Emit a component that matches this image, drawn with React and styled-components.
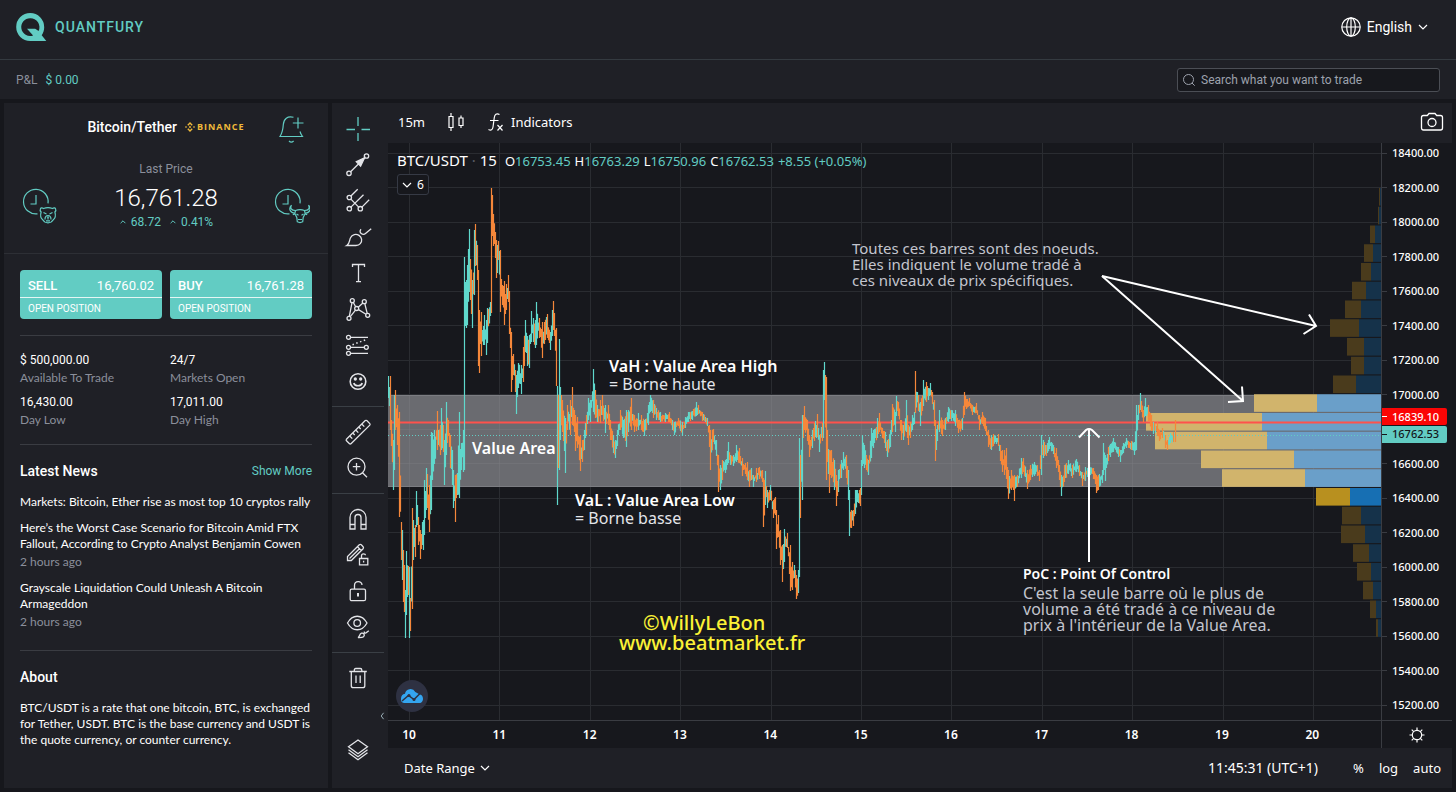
import React, { useState } from 'react';
import styled, { createGlobalStyle } from 'styled-components';

const GlobalStyle = createGlobalStyle`
  * {
    box-sizing: border-box;
  }

  body {
    margin: 0;
    background: #16171c;
    color: #fff;
    font-family: Roboto, 'Noto Sans', sans-serif;
    font-size: 12px;
    line-height: 16px;
  }

  button, input, select {
    font: inherit;
    color: inherit;
  }

  button {
    padding: 0;
    border: 0;
    background: none;
    cursor: pointer;
  }

  h1, h2, p, ul, dl, dd {
    margin: 0;
    padding: 0;
  }

  svg {
    display: block;
  }
`;

const Page = styled.div`
  display: flex;
  flex-direction: column;
  min-height: 100vh;
`;

const Header = styled.header`
  display: flex;
  align-items: center;
  justify-content: space-between;
  height: 60px;
  padding: 0 28px 6px 16px;
  background: #1f2026;
  border-bottom: 1px solid #343a40;
`;

const Brand = styled.a`
  display: flex;
  align-items: center;
  gap: 8px;
  color: #62ccc3;
  font-size: 14px;
  font-weight: 500;
  letter-spacing: 1px;
  text-decoration: none;
`;

const LanguageButton = styled.button`
  display: flex;
  align-items: center;
  gap: 6px;
  font-size: 14px;
`;

const AccountBar = styled.div`
  display: flex;
  align-items: center;
  justify-content: space-between;
  height: 39px;
  padding: 0 16px;
  background: #1f2026;
`;

const Profit = styled.div`
  display: flex;
  gap: 8px;
  color: #8b8f9b;

  span {
    color: #62ccc3;
  }
`;

const SearchBox = styled.label`
  display: flex;
  align-items: center;
  gap: 6px;
  width: 263px;
  height: 24px;
  padding: 0 5px;
  border: 1px solid #4b4e55;
  border-radius: 3px;
  background: #17181d;
  color: #9da2ad;

  input {
    flex: 1;
    min-width: 0;
    padding: 0;
    border: 0;
    outline: 0;
    background: none;
  }

  input::placeholder {
    color: #9da2ad;
    opacity: 1;
  }
`;

const Workspace = styled.main`
  display: flex;
  flex: 1;
  gap: 4px;
  padding: 4px 4px 5px;
`;

const Sidebar = styled.aside`
  width: 324px;
  flex-shrink: 0;
  background: #1f2026;
`;

const Quote = styled.section`
  display: grid;
  grid-template-columns: 36px 1fr 36px;
  grid-template-rows: 44px 1fr;
  align-items: center;
  height: 151px;
  padding: 2px 18px 11px;
  border-bottom: 1px solid #2d2f35;

  > svg {
    margin-top: 20px;
  }
`;

const AlertButton = styled.button`
  justify-self: center;
  margin-top: 4px;
`;

const Instrument = styled.div`
  display: flex;
  align-items: center;
  justify-content: center;
  gap: 8px;

  h1 {
    font-size: 14px;
    font-weight: 500;
    white-space: nowrap;
  }
`;

const Exchange = styled.span`
  display: flex;
  align-items: center;
  gap: 2px;
  color: #f0b93a;
  font-family: 'Open Sans', sans-serif;
  font-size: 9px;
  font-weight: 700;
  letter-spacing: 1px;
`;

const LastPrice = styled.div`
  grid-column: 2;
  display: flex;
  flex-direction: column;
  align-items: center;
  color: #8b8f9b;
`;

const PriceValue = styled.div`
  margin: 7px 0 2px;
  color: #fff;
  font-size: 24px;
  font-weight: 300;
  line-height: 28px;
`;

const Change = styled.div`
  display: flex;
  gap: 8px;
  color: #62ccc3;

  span {
    display: flex;
    align-items: center;
    gap: 4px;
  }
`;

const SidebarSection = styled.section`
  margin: 0 16px;
  padding: ${props => props.$padding};
  border-bottom: ${props => (props.$last ? '0' : '1px solid #3a3c42')};
`;

const Deals = styled.div`
  display: grid;
  grid-template-columns: 1fr 1fr;
  gap: 8px;
`;

const DealButton = styled.button`
  border-radius: 4px;
  background: #62ccc3;
  text-align: left;
  overflow: hidden;
`;

const DealPrice = styled.span`
  display: flex;
  align-items: center;
  justify-content: space-between;
  height: 28px;
  padding: 4px 8px 0;
  border-bottom: 1px solid #e4f6f4;
  font-size: 13px;

  b {
    font-weight: 500;
  }
`;

const DealAction = styled.span`
  display: block;
  padding: 3px 8px 2px;
  font-size: 10px;
`;

const Stats = styled.dl`
  display: grid;
  grid-template-columns: 1fr 1fr;
  gap: 8px;

  > div {
    display: flex;
    flex-direction: column-reverse;
    gap: 2px;
  }

  dt {
    color: #8b8f9b;
    font-family: Lato, sans-serif;
  }
`;

const SectionHead = styled.div`
  display: flex;
  justify-content: space-between;
  margin-bottom: 15px;

  h2 {
    font-size: 14px;
    font-weight: 500;
    line-height: 16px;
  }

  a {
    color: #62ccc3;
    text-decoration: none;
  }
`;

const NewsList = styled.ul`
  display: flex;
  flex-direction: column;
  gap: 10px;
  font-family: Lato, sans-serif;
  list-style: none;

  a {
    color: inherit;
    text-decoration: none;
  }
`;

const NewsTime = styled.div`
  margin-top: 2px;
  color: #8b8f9b;
`;

const Description = styled.p`
  font-family: Lato, sans-serif;
`;

const Terminal = styled.section`
  display: flex;
  flex: 1;
  min-width: 0;
  background: #1f2026;
  font-family: 'Noto Sans', sans-serif;
`;

const Tools = styled.nav`
  position: relative;
  display: flex;
  flex-direction: column;
  width: 56px;
  padding: 8px 4px 20px 0;
`;

const ToolButton = styled.button`
  display: grid;
  place-items: center;
  height: 36px;
  margin-top: ${props => (props.$bottom ? 'auto' : '0')};
  color: ${props => (props.$active ? '#62ccc3' : '#e3e4e8')};
`;

const ToolDivider = styled.hr`
  width: 100%;
  height: 1px;
  margin: 7px 0;
  border: 0;
  background: #3a3f45;
`;

const CollapseButton = styled.button`
  position: absolute;
  right: 2px;
  bottom: 68px;
  color: #9fb4bd;
`;

const ChartPanel = styled.div`
  display: flex;
  flex-direction: column;
  flex: 1;
  min-width: 0;
`;

const ChartToolbar = styled.div`
  display: flex;
  align-items: center;
  gap: 22px;
  height: 40px;
  padding: 0 8px 2px 10px;
  font-size: 13px;

  button {
    display: flex;
    align-items: center;
    gap: 6px;
  }

  button:last-child {
    margin-left: auto;
  }
`;

const ChartBody = styled.div`
  display: grid;
  grid-template-columns: 1fr 71px;
  background: #17181d;
`;

const Plot = styled.div`
  position: relative;

  > svg {
    width: 100%;
    height: auto;
  }
`;

const Legend = styled.div`
  position: absolute;
  top: 7px;
  left: 9px;
  display: flex;
  flex-direction: column;
  align-items: flex-start;
  gap: 3px;
`;

const LegendRow = styled.div`
  display: flex;
  align-items: baseline;
  gap: 4px;
  font-size: 13px;
  line-height: 20px;

  strong {
    margin-right: 4px;
    font-size: 15px;
    font-weight: 400;
  }

  i {
    color: #5a5d66;
    font-style: normal;
  }

  em {
    color: #62ccc3;
    font-style: normal;
  }
`;

const IndicatorCount = styled.button`
  display: flex;
  align-items: center;
  gap: 5px;
  height: 21px;
  padding: 0 4px;
  border: 1px solid #363a45;
  border-radius: 3px;
  background: #17181d;
`;

const VendorBadge = styled.a`
  position: absolute;
  left: 8px;
  bottom: 8px;
  display: grid;
  place-items: center;
  width: 32px;
  height: 32px;
  border-radius: 50%;
  background: #2e3142;
`;

const PriceAxis = styled.div`
  position: relative;
  display: flex;
  flex-direction: column;
  justify-content: space-between;
  padding: 2px 0 7px;
  border-left: 1px solid #3a3c42;
  font-size: 11px;
  font-weight: 500;
`;

const PriceLabel = styled.div`
  display: flex;
  align-items: center;
  gap: 5px;

  &::before {
    content: '';
    width: 5px;
    height: 1px;
    background: #3a3c42;
  }
`;

const PriceTag = styled(PriceLabel)`
  position: absolute;
  top: ${props => props.$top};
  left: 0;
  right: 5px;
  height: 17px;
  border-radius: 0 2px 2px 0;
  background: ${props => props.$background};
  color: ${props => props.$color};

  &::before {
    background: ${props => props.$color};
  }
`;

const TimeAxis = styled.div`
  display: flex;
  justify-content: space-between;
  height: 28px;
  padding: 6px 6% 0 12px;
  border-top: 1px solid #3a3c42;
  font-size: 12px;
  font-weight: 600;

  span {
    width: 18px;
    text-align: center;
  }
`;

const AxisSettings = styled.button`
  display: grid;
  place-items: center;
  border-top: 1px solid #3a3c42;
  border-left: 1px solid #3a3c42;
`;

const ChartFooter = styled.div`
  display: flex;
  align-items: center;
  gap: 15px;
  height: 40px;
  padding: 0 11px 0 16px;
  font-size: 13px;

  button {
    display: flex;
    align-items: center;
    gap: 5px;
  }

  button:first-child {
    margin-right: auto;
  }

  time {
    margin-right: 20px;
    font-size: 14px;
  }
`;

const Note = styled.text`
  fill: ${props => props.$fill || '#fff'};
  font-size: ${props => props.$size || 16}px;
  font-weight: ${props => props.$weight || 400};
`;

// x, high, low of the price action in chart coordinates
const SWINGS = [
  388, 376, 398, 390, 376, 430, 391, 420, 446, 393, 440, 490, 394, 395, 470, 395, 390, 430, 397, 405, 445, 399, 412, 517, 401, 522, 560, 402, 530, 580,
  403, 550, 602, 404, 565, 612, 405, 590, 638, 406, 551, 615, 408, 566, 595, 409, 567, 638, 410, 598, 631, 412, 508, 609,
  413, 520, 560, 415, 525, 557, 416, 491, 527, 417, 505, 525, 418, 517, 545, 420, 530, 559, 422, 522, 545, 423, 520, 550, 424, 480, 535,
  426, 468, 510, 427, 474, 508, 429, 485, 532, 431, 432, 510, 432, 433, 480, 434, 430, 464, 437, 411, 450, 438, 430, 445,
  440, 425, 455, 441, 408, 450, 443, 425, 452, 444, 440, 485, 446, 402, 455, 448, 420, 436, 450, 435, 468, 452, 450, 485,
  453, 470, 508, 455, 475, 522, 457, 473, 495, 459, 412, 498, 461, 443, 470, 463, 430, 472, 464, 257, 470, 465, 282, 326, 466, 280, 328,
  467, 265, 325, 469, 229, 292, 470, 259, 300, 472, 280, 328, 474, 230, 295, 475, 224, 266, 477, 245, 280, 478, 270, 366,
  479, 310, 373, 481, 312, 356, 483, 326, 345, 484, 315, 345, 486, 320, 355, 487, 308, 343, 490, 302, 316, 491, 188, 313,
  492, 195, 236, 493, 214, 246, 495, 232, 258, 496, 240, 278, 497, 245, 273, 498, 241, 260, 500, 250, 312, 502, 285, 305,
  504, 281, 325, 506, 284, 310, 508, 275, 302, 509, 291, 334, 511, 332, 392, 512, 356, 380, 513, 354, 375, 515, 370, 392,
  516, 375, 414, 518, 363, 388, 521, 365, 394, 523, 347, 382, 525, 320, 352, 527, 336, 366, 529, 335, 368, 531, 311, 342,
  533, 318, 342, 535, 320, 348, 536, 302, 345, 539, 318, 338, 542, 322, 358, 544, 322, 344, 547, 314, 338, 550, 332, 350,
  552, 310, 336, 553, 301, 330, 554, 313, 336, 556, 328, 386, 557, 386, 505, 559, 339, 470, 560, 387, 440, 562, 400, 432,
  565, 418, 473, 567, 405, 430, 570, 400, 435, 572, 387, 425, 574, 410, 432, 575, 415, 451, 577, 417, 448, 580, 435, 471,
  582, 440, 462, 584, 430, 450, 586, 415, 435, 588, 398, 420, 590, 400, 422, 593, 369, 412, 595, 390, 418, 597, 405, 422,
  600, 400, 423, 602, 395, 415, 605, 405, 433, 608, 405, 425, 610, 420, 440, 613, 435, 453, 615, 440, 458, 617, 430, 446,
  620, 410, 430, 623, 420, 438, 626, 410, 447, 628, 410, 432, 631, 398, 430, 634, 415, 432, 638, 413, 430, 641, 415, 430,
  644, 420, 436, 648, 405, 425, 650, 395, 412, 653, 400, 418, 656, 408, 420, 660, 412, 422, 665, 413, 422, 669, 412, 422,
  672, 420, 430, 674, 422, 435, 678, 418, 426, 682, 422, 436, 685, 417, 428, 688, 412, 422, 692, 411, 420, 696, 402, 416,
  698, 405, 414, 702, 412, 421, 707, 418, 426, 709, 425, 447, 710, 430, 470, 713, 429, 442, 716, 440, 456, 718, 455, 492,
  720, 465, 490, 722, 460, 480, 725, 460, 473, 728, 442, 463, 730, 455, 465, 733, 455, 466, 736, 445, 462, 739, 448, 463,
  742, 458, 476, 745, 463, 474, 747, 462, 480, 749, 470, 487, 751, 468, 480, 753, 475, 487, 756, 468, 482, 759, 467, 479,
  762, 470, 482, 763, 478, 527, 765, 471, 505, 767, 490, 508, 770, 485, 500, 773, 500, 518, 775, 497, 515, 776, 510, 549,
  778, 515, 537, 780, 530, 565, 782, 545, 582, 784, 529, 562, 787, 533, 548, 790, 545, 591, 792, 562, 590, 794, 565, 578,
  796, 575, 599, 798, 570, 593, 799, 438, 577, 800, 455, 518, 802, 415, 500, 803, 415, 438, 804, 406, 430, 807, 420, 441,
  809, 435, 457, 812, 430, 448, 814, 423, 441, 817, 414, 437, 819, 435, 452, 822, 423, 441, 823, 370, 438, 824, 362, 400,
  826, 377, 480, 827, 430, 462, 829, 450, 493, 831, 450, 478, 834, 460, 490, 836, 475, 506, 838, 470, 492, 841, 460, 478,
  843, 452, 470, 846, 455, 478, 848, 470, 500, 849, 490, 536, 851, 510, 528, 853, 510, 526, 855, 490, 514, 857, 490, 502,
  860, 488, 506, 861, 460, 495, 862, 435, 466, 864, 445, 468, 866, 455, 470, 868, 460, 475, 871, 428, 458, 873, 430, 448,
  877, 418, 438, 879, 413, 432, 882, 428, 438, 885, 432, 448, 887, 440, 457, 890, 430, 447, 892, 404, 432, 895, 412, 432,
  896, 396, 416, 898, 402, 416, 901, 420, 440, 903, 425, 440, 906, 400, 432, 908, 425, 445, 910, 422, 438, 912, 415, 430,
  914, 412, 424, 915, 371, 413, 918, 395, 411, 920, 402, 426, 923, 380, 406, 926, 382, 402, 928, 388, 400, 930, 383, 395,
  932, 392, 404, 934, 400, 426, 935, 420, 461, 937, 425, 441, 939, 410, 432, 942, 420, 436, 945, 418, 430, 948, 407, 422,
  951, 410, 421, 955, 410, 426, 958, 420, 433, 962, 418, 430, 964, 392, 415, 966, 399, 409, 969, 398, 406, 972, 405, 415,
  976, 403, 413, 979, 415, 430, 982, 412, 424, 985, 418, 431, 988, 430, 447, 991, 435, 450, 993, 434, 446, 998, 434, 446,
  1000, 445, 461, 1002, 450, 472, 1004, 450, 475, 1006, 448, 479, 1008, 470, 499, 1011, 470, 490, 1014, 475, 501,
  1017, 475, 487, 1021, 458, 478, 1023, 458, 472, 1027, 470, 489, 1030, 465, 480, 1034, 462, 476, 1037, 465, 476,
  1039, 470, 481, 1041, 435, 475, 1043, 440, 458, 1046, 445, 456, 1049, 437, 449, 1053, 445, 454, 1056, 448, 468,
  1059, 465, 480, 1061, 475, 496, 1064, 465, 482, 1068, 460, 474, 1072, 465, 478, 1076, 459, 472, 1079, 465, 476,
  1082, 472, 486, 1085, 467, 481, 1089, 462, 476, 1093, 468, 479, 1096, 475, 493, 1098, 475, 490, 1102, 470, 483,
  1103, 443, 475, 1105, 455, 481, 1108, 447, 461, 1113, 438, 452, 1118, 447, 457, 1120, 450, 462, 1123, 443, 453,
  1126, 438, 448, 1131, 441, 450, 1134, 442, 455, 1136, 405, 450, 1138, 405, 420, 1140, 393, 410, 1143, 410, 422,
  1145, 398, 416, 1148, 405, 421, 1151, 415, 431, 1153, 422, 434, 1157, 422, 436, 1159, 430, 441, 1162, 428, 438,
  1165, 435, 448, 1167, 440, 450, 1170, 433, 443, 1173, 432, 442, 1175, 420, 442, 1176, 435, 438
];

const UP = '#5fd8cc';
const DOWN = '#f5873a';

function buildCandles() {
  const candles = [];
  let seed = 7;
  const random = () => {
    seed = (seed * 16807) % 2147483647;
    return seed / 2147483647;
  };

  for (let i = 0; i < SWINGS.length - 3; i += 3) {
    const [x, high, low, nextX, nextHigh, nextLow] = SWINGS.slice(i, i + 6);
    const span = nextX - x;
    const previousMiddle = i > 0 ? SWINGS[i - 2] + SWINGS[i - 1] : high + low;
    const falling = nextHigh + nextLow > previousMiddle;
    for (let step = 0; step < span; step++) {
      const t = step / span;
      const top = high + (nextHigh - high) * t;
      const bottom = low + (nextLow - low) * t;
      const cut = step === 0 ? 0 : (bottom - top) * 0.4;
      const up = random() < (falling ? 0.25 : 0.75);
      candles.push({ x: x + step, top: top + cut * random(), bottom: bottom - cut * random(), up });
    }
  }
  return candles;
}

const toPath = (candles) => candles.map(c => `M${c.x + 0.5} ${c.top.toFixed(1)}V${c.bottom.toFixed(1)}`).join('');

const CANDLES = buildCandles();
const UP_PATH = toPath(CANDLES.filter(candle => candle.up));
const DOWN_PATH = toPath(CANDLES.filter(candle => !candle.up));

// left edge and buy/sell split of every row, top to bottom
const VOLUME_ROWS = [
  [1379, 1380], [1378, 1379], [1370, 1375], [1364, 1373], [1361, 1371], [1352, 1366], [1345, 1361], [1330, 1359],
  [1347, 1364], [1351, 1364], [1333, 1356], [1254, 1317], [1146, 1262], [1155, 1267], [1201, 1294], [1222, 1305],
  [1316, 1350], [1342, 1361], [1341, 1365], [1353, 1369], [1357, 1371], [1363, 1373], [1370, 1376], [1376, 1378]
];

const volumeColors = (index) => {
  if (index === 16) return ['#b8901f', '#176fb3'];
  if (index > 10 && index < 16) return ['#d1b46c', '#6a9fc9'];
  return ['#4a3b1c', '#15324a'];
};

const PRICES = Array.from({ length: 17 }, (_, i) => 18400 - i * 200);
const DAYS = Array.from({ length: 11 }, (_, i) => 10 + i);

function Icon({ children, size = 28, box = 28, width = 1.3 }) {
  return (
    <svg width={size} height={size} viewBox={`0 0 ${box} ${box}`} fill="none" stroke="currentColor" strokeWidth={width} aria-hidden="true">
      {children}
    </svg>
  );
}

function Chevron({ direction = 'down', size = 10 }) {
  const paths = { down: 'M1 3l4 4 4-4', up: 'M2 6.500l3-3 3 3', left: 'M7 1L4 5l3 4' };
  return <Icon size={size} box={10} width={1.2}><path d={paths[direction]} /></Icon>;
}

const TOOL_GROUPS = [
  [
    ['Cross', <path d="M14 2v9M14 18v8M2.500 14.500H11M17.500 14.500H26" />],
    ['Trend line', (
      <>
        <circle cx="5" cy="22.300" r="2.200" />
        <circle cx="22.500" cy="5" r="2.200" />
        <path d="M6.600 20.700L20.500 7" />
        <path d="M20.500 6.800l-8.200 4 4.300 4.300z" fill="currentColor" />
      </>
    )],
    ['Pitchfork', (
      <>
        <circle cx="5.300" cy="10.500" r="2.200" />
        <circle cx="5.300" cy="21.700" r="2.200" />
        <circle cx="16.300" cy="21.700" r="2.200" />
        <path d="M6.900 9l6.800-6.700M6.900 20.100L19.500 7.800M17.900 20.100l7.300-7.300M6.900 12.100l7.800 8" />
      </>
    )],
    ['Brush', (
      <>
        <path d="M2.800 22.500c3-1.700 2.400-5.200 3.700-7.800 1.600-3.400 5.600-4.300 8.500-2.300 3 2.100 3.500 5.700 1.300 8.300-1.200 1.400-2.600 1.800-4.300 1.800z" />
        <path d="M17 6.200c-1.500 1.600-1 3.300.2 4.300 1.400 1.200 3 1.300 4.600-.2l5.400-4.600" />
      </>
    )],
    ['Text', <path d="M8.500 8V5.500h12V8M14.500 5.500v17M12 22.700h5" />],
    ['Patterns', (
      <>
        <circle cx="8.300" cy="5.700" r="2" />
        <circle cx="20.300" cy="6.700" r="2" />
        <circle cx="12.700" cy="13.500" r="2" />
        <circle cx="23.700" cy="20.300" r="2" />
        <circle cx="5" cy="23.300" r="2" />
        <path d="M8 7.700L5.300 21.300M9.300 7.500l2.400 4.300M14.200 12.200l4.700-4.200M20.800 8.700l2.400 9.600M14.500 14.600l7.500 4.600M11.500 15.200l-5.200 6.500" />
      </>
    )],
    ['Prediction', (
      <>
        <circle cx="4.500" cy="6.300" r="2" />
        <circle cx="4.500" cy="16.300" r="2" />
        <circle cx="22.300" cy="16.300" r="2" />
        <circle cx="4.500" cy="22.300" r="2" />
        <path d="M6.500 6.300H24M6.500 16.300h13.800M6.500 22.300H24" />
        <path d="M8.500 13.700L22 8.700" strokeWidth="1.500" strokeDasharray="1.500 2.500" />
      </>
    )],
    ['Icons', (
      <>
        <circle cx="14" cy="14.500" r="7.800" strokeWidth="1.600" />
        <circle cx="11.300" cy="12" r="1" fill="currentColor" />
        <circle cx="16.700" cy="12" r="1" fill="currentColor" />
        <path d="M9.800 16c.8 3.700 7.600 3.700 8.400 0" strokeWidth="1.600" />
      </>
    )]
  ],
  [
    ['Measure', (
      <>
        <path d="M2.400 21.300L21.300 2.600q.8-.6 1.500 0l3 3q.6.800 0 1.500L7 25.700q-.8.600-1.500 0l-3-3q-.7-.7-.1-1.400z" />
        <path d="M6 18.300l2.300 2.300M9 15.300l1.700 1.700M12 12.300l2.300 2.300M15 9.300l1.700 1.700M18 6.300l2.300 2.300" />
      </>
    )],
    ['Zoom in', (
      <>
        <circle cx="12.500" cy="12.700" r="8.500" />
        <path d="M18.500 18.700l4.500 4.500M12.500 9v7.500M8.800 12.700h7.500" />
      </>
    )]
  ],
  [
    ['Magnet', <path d="M6 24V12.500a8 8 0 0 1 16 0V24h-5V12.500a3 3 0 0 0-6 0V24zM6 19.500h5M17 19.500h5" />],
    ['Drawing mode', (
      <>
        <path d="M3.500 19.500v-4L15.300 3.800q1-.8 2 0l1.800 1.900q.8 1 0 2L7.300 19.500zM13.500 5.700l3.700 3.700M5.500 17.500L15.700 7.500" />
        <path d="M15.500 17.500h8.300v6.300h-8.300zM17.500 17.300v-2.500q0-2 2-2t2 1.500M19.600 19.700v1.800" />
      </>
    )],
    ['Lock drawings', (
      <>
        <rect x="6.200" y="12.200" width="15.300" height="11.500" rx="1.500" />
        <path d="M10.500 12V8.500c0-5 7.500-5 7.500-.5" />
        <path d="M14 16v3.500" strokeWidth="2" />
      </>
    )],
    ['Hide drawings', (
      <>
        <path d="M3.500 10c5-9 14.500-9 19.500 0-5 9-14.500 9-19.500 0z" />
        <circle cx="13.200" cy="10" r="3.300" />
        <path d="M14 24.700c1.700-.8 1.200-3.700 3.500-4.500 2.500-.4 3.700 1.700 2 3.600-1 1-2.300.9-5.500.9zM20.300 18.500c-.2 2 1.300 2 2.500.8l2-1.600" />
      </>
    )]
  ],
  [
    ['Remove drawings', (
      <>
        <path d="M5.300 7.500h17.500M10.300 7.500V6q0-1.500 1.500-1.500h4.500Q17.800 4.500 17.800 6v1.500" />
        <path d="M7.300 7.500v14.200q0 2 2 2h9.500q2 0 2-2V7.500M12 11.500V19M16.200 11.500V19" />
      </>
    )]
  ]
];

function LogoMark() {
  return (
    <svg width="31" height="30" viewBox="0 0 31 30" aria-hidden="true">
      <path
        d="M14.200 1a14 14 0 0 1 14 14.200c0 3-.9 5.800-2.500 8l4.600 5.800H14.200A14 14 0 0 1 14.200 1zm0 5.200a8.900 8.900 0 1 0 2.900 17.300L11 16.800h8.200l3.400 2.100A8.900 8.900 0 0 0 14.200 6.200z"
        fill="#62ccc3"
        fillRule="evenodd"
      />
    </svg>
  );
}

function SessionIcon({ animal }) {
  return (
    <svg width="36" height="36" viewBox="0 0 36 36" fill="none" stroke="#62ccc3" strokeWidth="1.200" aria-hidden="true">
      <path d="M15.500 25.800A12.300 12.300 0 1 1 26 15.300M14 7v9H8.500" />
      {animal === 'bear' ? (
        <>
          <path d="M21.500 20.500c-3-2-4.300 1.500-2.400 3.500-.8 3-.5 6 1.400 7.500 1.500 2.500 3 3.300 5.500 3.300s4-.8 5.500-3.300c1.900-1.500 2.200-4.500 1.400-7.500 1.900-2 .6-5.500-2.400-3.500-2.800-1-6.200-1-9 0z" />
          <path d="M21.500 24.500l3 1.500M30.500 24.500l-3 1.500M23 31.500c0-2.700 1.200-4 3-4s3 1.300 3 4M24.800 29h2.400M26 29v2.500M24 32.800h4" />
        </>
      ) : (
        <>
          <path d="M21.500 22.500c-4.500 0-5.500-2.500-4-5.300-3.300 3.300-1.500 7.600 3.300 8.200M30.500 22.500c4.500 0 5.500-2.500 4-5.300 3.300 3.300 1.500 7.600-3.300 8.200" />
          <path d="M21.500 22.500c3-1.300 6-1.300 9 0l.7 3-2 4-.5 4.300q-2.700 1.500-5.400 0l-.5-4.300-2-4zM22.500 26l2 1.200M29.500 26l-2 1.200M24 31.500h4M20.800 26l-2 .8M31.200 26l2 .8" />
        </>
      )}
    </svg>
  );
}

function Quotes() {
  return (
    <Quote>
      <span />
      <Instrument>
        <h1>Bitcoin/Tether</h1>
        <Exchange>
          <svg width="10" height="10" viewBox="0 0 10 10" fill="#f0b93a" aria-hidden="true">
            <path d="M5 0l2.700 2.700-1 1L5 2 3.300 3.700l-1-1zM5 10L2.300 7.300l1-1L5 8l1.700-1.700 1 1zM5 3.800L6.200 5 5 6.200 3.800 5zM1 4l1 1-1 1-1-1zM9 4l1 1-1 1-1-1z" />
          </svg>
          BINANCE
        </Exchange>
      </Instrument>
      <AlertButton aria-label="Create alert">
        <svg width="28" height="30" viewBox="0 0 28 30" fill="none" stroke="#62ccc3" strokeWidth="1.200" aria-hidden="true">
          <path d="M15.500 3.300C9.500 1.500 5.700 5 5.300 10.500 5 16 4.800 18 2 22.500h22.500c-1.200-1.700-2-3-2.500-5M20 3.500v11M14.800 9h10.700M11 27q2.300 2.300 4.600 0" />
        </svg>
      </AlertButton>
      <SessionIcon animal="bear" />
      <LastPrice>
        <span>Last Price</span>
        <PriceValue>16,761.28</PriceValue>
        <Change>
          <span><Chevron direction="up" size={8} />68.72</span>
          <span><Chevron direction="up" size={8} />0.41%</span>
        </Change>
      </LastPrice>
      <SessionIcon animal="bull" />
    </Quote>
  );
}

function Deal({ side, price }) {
  return (
    <DealButton>
      <DealPrice><b>{side}</b>{price}</DealPrice>
      <DealAction>OPEN POSITION</DealAction>
    </DealButton>
  );
}

const STATS = [
  ['Available To Trade', '$ 500,000.00'],
  ['Markets Open', '24/7'],
  ['Day Low', '16,430.00'],
  ['Day High', '17,011.00']
];

const NEWS = [
  { title: 'Markets: Bitcoin, Ether rise as most top 10 cryptos rally' },
  { title: 'Here’s the Worst Case Scenario for Bitcoin Amid FTX Fallout, According to Crypto Analyst Benjamin Cowen', time: '2 hours ago' },
  { title: 'Grayscale Liquidation Could Unleash A Bitcoin Armageddon', time: '2 hours ago' }
];

function Notes() {
  const lines = (x, y, height, rows) => rows.map((row, i) => <tspan key={row} x={x} y={y + i * height}>{row}</tspan>);
  return (
    <>
      <Note $fill="#c3c5ce" $size={15}>
        {lines(852, 254, 16, ['Toutes ces barres sont des noeuds.', 'Elles indiquent le volume tradé à', 'ces niveaux de prix spécifiques.'])}
      </Note>
      <Note $weight={600}>{lines(609, 372, 18, ['VaH : Value Area High'])}</Note>
      <Note $fill="#e4e5ea">{lines(609, 390, 18, ['= Borne haute'])}</Note>
      <Note $weight={600}>{lines(472, 454, 18, ['Value Area'])}</Note>
      <Note $weight={600}>{lines(575, 506, 18, ['VaL : Value Area Low'])}</Note>
      <Note $fill="#e4e5ea">{lines(575, 524, 18, ['= Borne basse'])}</Note>
      <Note $fill="#fbf236" $size={20} $weight={500}>{lines(643, 630, 20, ['©WillyLeBon'])}</Note>
      <Note $fill="#fbf236" $size={20} $weight={500}>{lines(619, 650, 20, ['www.beatmarket.fr'])}</Note>
      <Note $size={14} $weight={600}>{lines(1023, 579, 16, ['PoC : Point Of Control'])}</Note>
      <Note $fill="#c3c5ce">
        {lines(1023, 599, 16, ["C'est la seule barre où le plus de", 'volume a été tradé à ce niveau de', "prix à l'intérieur de la Value Area."])}
      </Note>
    </>
  );
}

function PriceChart() {
  return (
    <svg viewBox="388 143 993 577" role="img" aria-label="BTC/USDT 15 minute chart">
      <g stroke="#2a2c31">
        {PRICES.map((price, i) => <path key={price} d={`M388 ${Math.round(153 + i * 34.47) + 0.5}H1381`} />)}
        {DAYS.map((day, i) => <path key={day} d={`M${Math.round(409 + i * 90.4) + 0.5} 143V720`} />)}
      </g>
      <rect x="388" y="395" width="993" height="92" fill="#6a6b70" />
      <g stroke="#7c7d82">
        <path d="M388 395.500H1381M388 486.500H1381" />
        <path d="M388 429.500H1381M388 463.500H1381" opacity="0.4" />
        {DAYS.map((day, i) => <path key={day} d={`M${Math.round(409 + i * 90.4) + 0.5} 395V487`} opacity="0.4" />)}
      </g>
      {VOLUME_ROWS.map(([left, split], i) => {
        const [buy, sell] = volumeColors(i);
        const y = 188 + i * 18.75;
        return (
          <g key={i}>
            <rect x={left} y={y} width={split - left} height="17.600" fill={buy} />
            <rect x={split} y={y} width={1381 - split} height="17.600" fill={sell} />
          </g>
        );
      })}
      <path d="M388 422.500H1381" stroke="#ff524c" strokeWidth="2" />
      <path d="M388 435.500H1381" stroke="#62ccc3" strokeDasharray="1 2" />
      <path d={UP_PATH} stroke={UP} strokeWidth="1.200" />
      <path d={DOWN_PATH} stroke={DOWN} strokeWidth="1.200" />
      <g fill="none" stroke="#fff" strokeWidth="2">
        <path d="M1102 276L1316 326M1309 314.500l7 11.500-12.500 8" />
        <path d="M1102 276l141 125M1242 386.500l1 14.500-15 1" />
        <path d="M1089 562V429M1079 437.500l7-7.500q3-2 6 0l7.500 7.500" />
      </g>
      <Notes />
    </svg>
  );
}

function App() {
  const [tool, setTool] = useState('Cross');
  const [search, setSearch] = useState('');

  return (
    <Page>
      <GlobalStyle />
      <Header>
        <Brand href="#home">
          <LogoMark />
          QUANTFURY
        </Brand>
        <LanguageButton>
          <Icon size={20} box={20} width={1.2}>
            <circle cx="10" cy="10" r="9.200" />
            <ellipse cx="10" cy="10" rx="4.300" ry="9.200" />
            <path d="M10 .8v18.400M.8 10h18.400" />
          </Icon>
          English
          <Chevron />
        </LanguageButton>
      </Header>
      <AccountBar>
        <Profit>P&amp;L <span>$ 0.00</span></Profit>
        <SearchBox>
          <Icon size={12} box={12} width={1}>
            <circle cx="5.500" cy="5.500" r="5" />
            <path d="M9 9l2.700 2.700" />
          </Icon>
          <input
            aria-label="Search"
            placeholder="Search what you want to trade"
            value={search}
            onChange={e => setSearch(e.target.value)}
          />
        </SearchBox>
      </AccountBar>
      <Workspace>
        <Sidebar>
          <Quotes />
          <SidebarSection $padding="16px 0">
            <Deals>
              <Deal side="SELL" price="16,760.02" />
              <Deal side="BUY" price="16,761.28" />
            </Deals>
          </SidebarSection>
          <SidebarSection $padding="16px 0">
            <Stats>
              {STATS.map(([label, value]) => (
                <div key={label}>
                  <dt>{label}</dt>
                  <dd>{value}</dd>
                </div>
              ))}
            </Stats>
          </SidebarSection>
          <SidebarSection $padding="18px 0 20px">
            <SectionHead>
              <h2>Latest News</h2>
              <a href="#news">Show More</a>
            </SectionHead>
            <NewsList>
              {NEWS.map(item => (
                <li key={item.title}>
                  <a href="#article">{item.title}</a>
                  {item.time && <NewsTime>{item.time}</NewsTime>}
                </li>
              ))}
            </NewsList>
          </SidebarSection>
          <SidebarSection $padding="18px 0" $last>
            <SectionHead>
              <h2>About</h2>
            </SectionHead>
            <Description>
              BTC/USDT is a rate that one bitcoin, BTC, is exchanged for Tether, USDT. BTC is the base currency and USDT is
              the quote currency, or counter currency.
            </Description>
          </SidebarSection>
        </Sidebar>
        <Terminal>
          <Tools aria-label="Drawing tools">
            {TOOL_GROUPS.map((group, i) => (
              <React.Fragment key={group[0][0]}>
                {i > 0 && <ToolDivider />}
                {group.map(([name, drawing]) => (
                  <ToolButton key={name} aria-label={name} $active={tool === name} onClick={() => setTool(name)}>
                    <Icon>{drawing}</Icon>
                  </ToolButton>
                ))}
              </React.Fragment>
            ))}
            <ToolButton aria-label="Object tree" $bottom>
              <Icon>
                <path d="M14 4l9.500 6.800-9.500 7-9.500-7zM4.500 13.800l9.500 7 9.500-7M4.500 16.800l9.500 7 9.500-7" />
              </Icon>
            </ToolButton>
            <CollapseButton aria-label="Hide drawing tools"><Chevron direction="left" size={8} /></CollapseButton>
          </Tools>
          <ChartPanel>
            <ChartToolbar>
              <button>15m</button>
              <button aria-label="Candles">
                <Icon size={18} box={18} width={1.2}>
                  <path d="M2 3.500h4v11H2zM4 0v3.500M4 14.500V18M12 5h4v7.500h-4zM14 2.500V5M14 12.500V15" />
                </Icon>
              </button>
              <button>
                <Icon size={18} box={18} width={1.2}>
                  <path d="M12.500 1.500c-3-1.700-4.800 0-5.200 3L6 14c-.4 3-2 3.700-4.500 2.500M3 7.500h8.500M10.500 12l5 5.500M15.500 12l-5 5.500" />
                </Icon>
                Indicators
              </button>
              <button aria-label="Take a snapshot">
                <Icon size={24} box={24}>
                  <path d="M3.500 5.500h3.800L9 3.500h6l1.700 2h3.800q2 0 2 2V18q0 2-2 2h-17q-2 0-2-2V7.500q0-2 2-2z" />
                  <circle cx="12" cy="12.500" r="4" />
                </Icon>
              </button>
            </ChartToolbar>
            <ChartBody>
              <Plot>
                <PriceChart />
                <Legend>
                  <LegendRow>
                    <strong>BTC/USDT <i>·</i> 15</strong>
                    <span>O<em>16753.45</em></span>
                    <span>H<em>16763.29</em></span>
                    <span>L<em>16750.96</em></span>
                    <span>C<em>16762.53</em></span>
                    <em>+8.55 (+0.05%)</em>
                  </LegendRow>
                  <IndicatorCount><Chevron />6</IndicatorCount>
                </Legend>
                <VendorBadge href="#charts" aria-label="Charting library">
                  <svg width="24" height="16" viewBox="0 0 24 16" aria-hidden="true">
                    <path d="M1 10.500a5 5 0 0 1 4-4.700A5.500 5.500 0 0 1 15.300 4l4 2.300a4.600 4.600 0 0 1 1 8.700H4a4 4 0 0 1-3-4.500z" fill="#34a5f0" />
                    <path d="M2 13l6.500-5.500 5.500 4 6-6" fill="none" stroke="#2e3142" strokeWidth="1.500" />
                    <circle cx="9" cy="7.500" r="1.500" fill="#2e3142" />
                    <circle cx="14" cy="11.500" r="1.500" fill="#2e3142" />
                  </svg>
                </VendorBadge>
              </Plot>
              <PriceAxis>
                {PRICES.map(price => <PriceLabel key={price}>{price === 16800 ? '\u00a0' : price.toFixed(2)}</PriceLabel>)}
                <PriceTag $top="46%" $background="#fb0505" $color="#fff">16839.10</PriceTag>
                <PriceTag $top="49%" $background="#62ccc3" $color="#14161b">16762.53</PriceTag>
              </PriceAxis>
              <TimeAxis>
                {DAYS.map(day => <span key={day}>{day}</span>)}
              </TimeAxis>
              <AxisSettings aria-label="Chart settings">
                <Icon size={16} box={16} width={1.2}>
                  <circle cx="8" cy="8" r="4.700" />
                  <path d="M8 .5v2.800M8 12.700v2.800M.5 8h2.800M12.700 8h2.800M2.700 2.700l2 2M11.300 11.300l2 2M13.300 2.700l-2 2M4.700 11.300l-2 2" />
                </Icon>
              </AxisSettings>
            </ChartBody>
            <ChartFooter>
              <button>Date Range <Chevron /></button>
              <time>11:45:31 (UTC+1)</time>
              <button>%</button>
              <button>log</button>
              <button>auto</button>
            </ChartFooter>
          </ChartPanel>
        </Terminal>
      </Workspace>
    </Page>
  );
}

export default App;
